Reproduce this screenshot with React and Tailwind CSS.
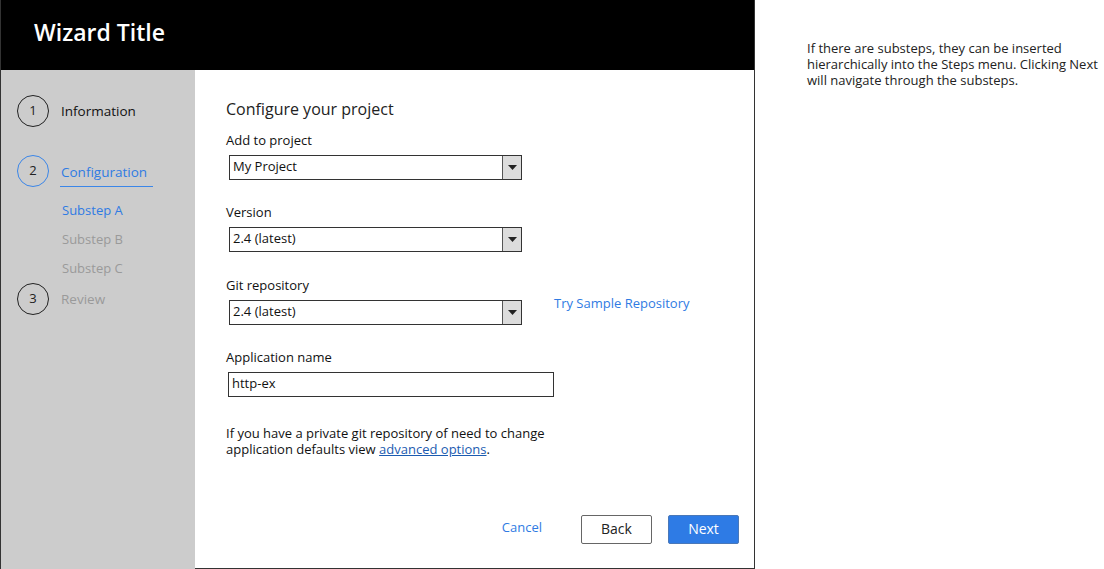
import React from 'react';

const Caret = () => (
    <svg width="9" height="5" viewBox="0 0 9 5">
        <path d="M0 0 H9 L4.5 5 Z" fill="#222" />
    </svg>
);

const Select = ({ value }) => (
    <div className="ml-[3px] flex h-[25px] w-[293px] border border-[#333] bg-white">
        <div className="flex flex-1 items-center pb-[1px] pl-[3px] text-[13px] text-[#111]">{value}</div>
        <div className="flex w-[19px] items-center justify-center border-l border-[#555] bg-[#dcdcdc]">
            <Caret />
        </div>
    </div>
);

const Step = ({ num, label, state }) => {
    const circle = state === 'active' ? 'border-[#3b86e8]' : 'border-[#222]';
    const text = state === 'active' ? 'text-[#2f7be3]' : state === 'todo' ? 'text-[#9a9a9a]' : 'text-[#111]';
    return (
        <div className="flex items-start">
            <div className={`flex h-[32px] w-[32px] shrink-0 items-center justify-center rounded-full border ${circle} text-[13px] text-[#222]`}>
                {num}
            </div>
            {state === 'active' ? (
                <div className="ml-[11px] mt-[4px] border-b border-[#3b86e8] pb-[3px] pl-[1px] pr-[6px]">
                    <span className={`text-[13.5px] leading-[20px] ${text}`}>{label}</span>
                </div>
            ) : (
                <span className={`ml-[12px] mt-[6px] text-[13.5px] leading-[20px] ${text}`}>{label}</span>
            )}
        </div>
    );
};

export default function App() {
    return (
        <div className="flex h-[569px] w-[1104px] bg-white font-['Open_Sans',sans-serif]">
            <div className="flex h-full w-[755px] shrink-0 flex-col border-x border-[#333]">
                <div className="flex h-[70px] items-center bg-black pb-[5px] pl-[33px]">
                    <h1 className="text-[23px] font-semibold text-white">Wizard Title</h1>
                </div>
                <div className="flex flex-1">
                    <div className="w-[194px] bg-[#cccccc] pl-[16px] pt-[25px]">
                        <Step num="1" label="Information" state="done" />
                        <div className="mt-[28px]">
                            <Step num="2" label="Configuration" state="active" />
                        </div>
                        <div className="mt-[9px] pl-[45px] text-[13px] leading-[29px]">
                            <div className="text-[#2f7be3]">Substep A</div>
                            <div className="text-[#9a9a9a]">Substep B</div>
                            <div className="text-[#9a9a9a]">Substep C</div>
                        </div>
                        <Step num="3" label="Review" state="todo" />
                    </div>
                    <div className="flex flex-1 flex-col border-b border-[#333] pl-[31px] pt-[27px] text-[#111]">
                        <h2 className="text-[16px] leading-[24px] text-[#222]">Configure your project</h2>
                        <label className="mt-[10px] text-[13px] leading-[18px]">Add to project</label>
                        <div className="mt-[6px]">
                            <Select value="My Project" />
                        </div>
                        <label className="mt-[23px] text-[13px] leading-[18px]">Version</label>
                        <div className="mt-[6px]">
                            <Select value="2.4 (latest)" />
                        </div>
                        <label className="mt-[24px] text-[13px] leading-[18px]">Git repository</label>
                        <div className="mt-[6px] flex items-start">
                            <Select value="2.4 (latest)" />
                            <a className="ml-[32px] -mt-[7px] text-[13px] leading-[20px] text-[#2f7be3]">Try Sample Repository</a>
                        </div>
                        <label className="mt-[23px] text-[13px] leading-[18px]">Application name</label>
                        <div className="mt-[6px] ml-[2px] flex h-[25px] w-[326px] items-center border border-[#333] pb-[1px] pl-[3px] text-[13px]">
                            http-ex
                        </div>
                        <p className="mt-[28px] w-[340px] text-[13px] leading-[16px]">
                            If you have a private git repository of need to change application defaults view{' '}
                            <a className="text-[#1b5bb0] underline">advanced options</a>.
                        </p>
                        <div className="mt-auto flex items-center justify-end pb-[24px] pr-[15px]">
                            <a className="mb-[4px] text-[13px] text-[#2f7be3]">Cancel</a>
                            <button className="ml-[39px] h-[29px] w-[71px] rounded-[2px] border border-[#666] bg-white pb-[3px] text-[14px] text-[#222]">Back</button>
                            <button className="ml-[16px] h-[29px] w-[71px] rounded-[2px] border border-[#4a78b8] bg-[#2e7be5] pb-[3px] text-[14px] text-white">Next</button>
                        </div>
                    </div>
                </div>
            </div>
            <div className="pl-[52px] pt-[40px]">
                <p className="w-[296px] text-[13px] leading-[16px] text-[#222]">
                    If there are substeps, they can be inserted hierarchically into the Steps menu. Clicking Next will navigate through the substeps.
                </p>
            </div>
        </div>
    );
}
